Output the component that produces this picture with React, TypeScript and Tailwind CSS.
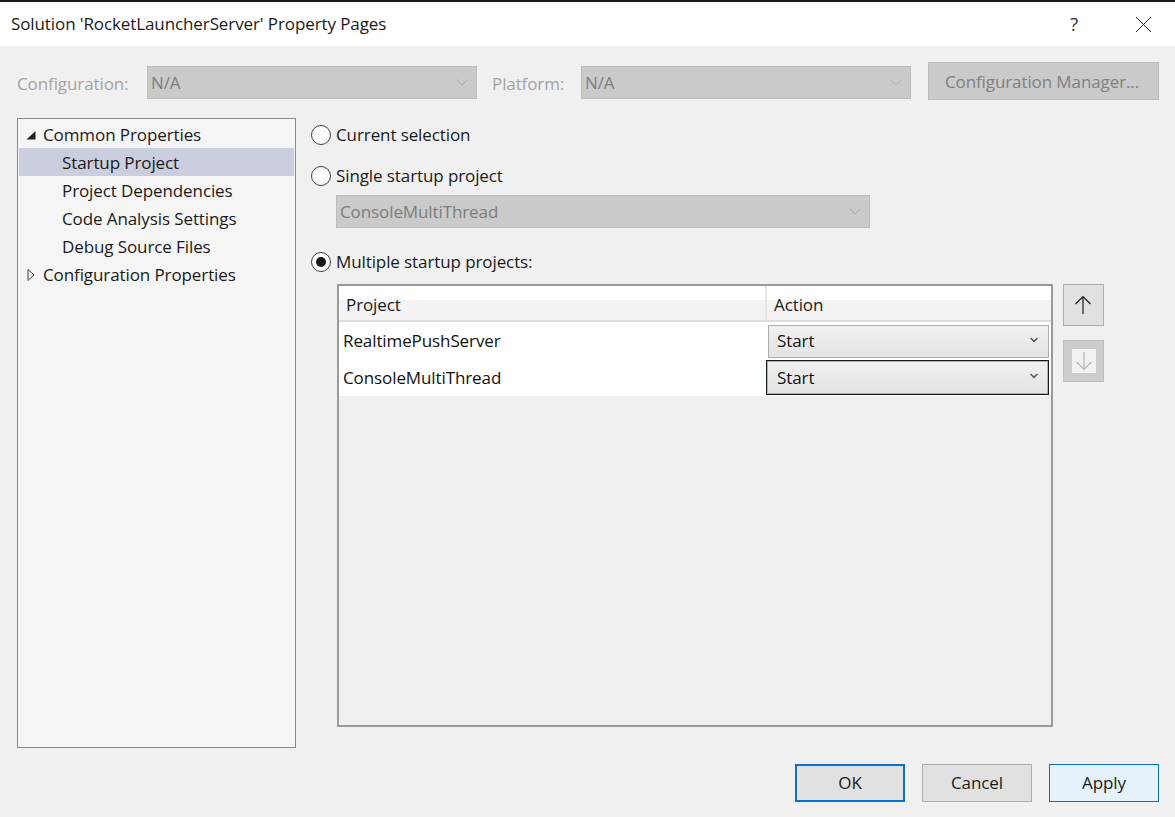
import React from "react";

const font = { fontFamily: '"Open Sans", "Noto Sans", sans-serif' };

function Chevron({ color = "#a8a8a8" }: { color?: string }) {
  return (
    <svg width="14" height="9" viewBox="0 0 14 9" fill="none" className="shrink-0">
      <path d="M1.5 1.5 L7 7 L12.5 1.5" stroke={color} strokeWidth="1" />
    </svg>
  );
}

function SmallChevron() {
  return (
    <svg width="8" height="6" viewBox="0 0 8 6" fill="none" className="mb-[3px] shrink-0">
      <path d="M0.6 1 L4 4.4 L7.4 1" stroke="#555" strokeWidth="1.5" />
    </svg>
  );
}

function DisabledCombo({ text, className }: { text: string; className: string }) {
  return (
    <div className={`flex h-[33px] items-center justify-between border border-[#bcbcbc] bg-[#cacaca] pl-[3px] pr-[7px] text-[#7d7d7d] ${className}`}>
      <span>{text}</span>
      <Chevron />
    </div>
  );
}

function Radio({ label, checked = false }: { label: string; checked?: boolean }) {
  return (
    <div className="flex h-[22px] items-center">
      <span className="flex h-[20px] w-[20px] shrink-0 items-center justify-center rounded-full border border-[#3f3f3f] bg-white">
        {checked && <span className="h-[10px] w-[10px] rounded-full bg-[#1a1a1a]" />}
      </span>
      <span className="ml-[5px] text-[#1a1a1a]">{label}</span>
    </div>
  );
}

function TreeRow({ label, selected = false }: { label: string; selected?: boolean }) {
  return (
    <div className={`flex h-[28px] items-center pl-[43px] pt-[2px] text-[#1a1a1a] ${selected ? "bg-[#cbcede]" : ""}`}>{label}</div>
  );
}

function Combo({ focused = false }: { focused?: boolean }) {
  return (
    <div
      className={`flex items-center justify-between bg-gradient-to-b from-[#f0f0f0] to-[#e4e4e4] pr-[10px] text-[#111] ${
        focused
          ? "h-[35px] w-[283px] border border-[#101820] pl-[10px] shadow-[inset_0_0_0_1px_#9fb6cf]"
          : "ml-[2px] h-[33px] w-[281px] border border-[#acacac] pl-[8px]"
      }`}
    >
      <span>Start</span>
      <SmallChevron />
    </div>
  );
}

function MoveButton({ up }: { up: boolean }) {
  return (
    <div className={`flex h-[42px] w-[41px] items-center justify-center border ${up ? "border-[#adadad] bg-[#e1e1e1]" : "border-[#bfbfbf] bg-[#cccccc]"}`}>
      <span className={`flex h-[24px] w-[24px] items-center justify-center ${up ? "pr-[2px]" : "bg-[#f2f2f2]"}`}>
        <svg width="18" height="20" viewBox="0 0 18 20" fill="none">
          {up ? (
            <path d="M9 19 V1.5 M1.5 9 L9 1.5 L16.5 9" stroke="#1a1a1a" strokeWidth="1.2" />
          ) : (
            <path d="M9 1 V18.5 M1.5 11 L9 18.5 L16.5 11" stroke="#b4b4b4" strokeWidth="1.2" />
          )}
        </svg>
      </span>
    </div>
  );
}

function FootButton({ label, className }: { label: string; className: string }) {
  return (
    <div className={`flex h-[38px] w-[110px] items-center justify-center text-[#1a1a1a] ${className}`}>{label}</div>
  );
}

export default function App() {
  return (
    <div style={font} className="flex h-[817px] w-[1175px] flex-col overflow-hidden bg-[#f0f0f0] text-[17px] leading-[22px] tracking-[-0.1px]">
      <div className="flex h-[46px] shrink-0 items-center justify-between border-t-2 border-[#1c1c1c] bg-white pl-[11px] pr-[23px] text-[#1a1a1a]">
        <span>Solution 'RocketLauncherServer' Property Pages</span>
        <div className="flex items-center gap-[57px]">
          <span className="text-[19px] text-[#333]">?</span>
          <svg width="17" height="17" viewBox="0 0 17 17" fill="none">
            <path d="M1 1 L16 16 M16 1 L1 16" stroke="#222" strokeWidth="1" />
          </svg>
        </div>
      </div>

      <div className="flex flex-col px-[16px] pl-[17px]">
        <div className="mt-[16px] flex h-[38px] items-center">
          <span className="mt-[6px] w-[130px] text-[#a4a4a4]">Configuration:</span>
          <DisabledCombo text="N/A" className="mt-[3px] w-[330px]" />
          <span className="ml-[15px] mt-[6px] w-[89px] text-[#a4a4a4]">Platform:</span>
          <DisabledCombo text="N/A" className="mt-[3px] w-[330px]" />
          <div className="ml-[17px] flex h-[38px] w-[231px] items-center justify-center border border-[#bcbcbc] bg-[#cacaca] pr-[3px] pt-[2px] text-[#808080]">
            Configuration Manager...
          </div>
        </div>

        <div className="mt-[18px] flex h-[630px]">
          <div className="flex h-full w-[279px] shrink-0 flex-col border border-[#8a8a8a] bg-[#f5f5f5] p-px">
            <div className="flex h-[28px] items-center pt-[2px] text-[#1a1a1a]">
              <svg width="12" height="10" viewBox="0 0 12 10" className="ml-[6px] mr-[6px]">
                <path d="M10.5 1 V9.5 H1.5 Z" fill="#222" />
              </svg>
              Common Properties
            </div>
            <TreeRow label="Startup Project" selected />
            <TreeRow label="Project Dependencies" />
            <TreeRow label="Code Analysis Settings" />
            <TreeRow label="Debug Source Files" />
            <div className="flex h-[28px] items-center pt-[2px] text-[#1a1a1a]">
              <svg width="8" height="14" viewBox="0 0 8 14" className="ml-[8px] mr-[8px]">
                <path d="M1 1.5 L7 7 L1 12.5 Z" fill="#f5f5f5" stroke="#444" />
              </svg>
              Configuration Properties
            </div>
          </div>

          <div className="ml-[15px] flex min-w-0 flex-1 flex-col">
            <div className="mt-[6px]">
              <Radio label="Current selection" />
            </div>
            <div className="mt-[19px]">
              <Radio label="Single startup project" />
            </div>
            <DisabledCombo text="ConsoleMultiThread" className="ml-[25px] mt-[8px] w-[534px]" />
            <div className="mt-[23px]">
              <Radio label="Multiple startup projects:" checked />
            </div>

            <div className="ml-[26px] mt-[11px] flex">
              <div className="flex h-[443px] w-[716px] flex-col border-2 border-[#9a9a9a] bg-[#f0f0f0]">
                <div className="flex h-[36px] shrink-0 border-b-2 border-[#dcdcdc] bg-gradient-to-b from-white from-40% to-[#f3f3f3] to-40% text-[#1a1a1a]">
                  <div className="flex w-[428px] items-center border-r-2 border-[#e6e6e6] pl-[7px] pt-[3px]">Project</div>
                  <div className="flex flex-1 items-center pl-[7px] pt-[3px]">Action</div>
                </div>
                <div className="flex h-[37px] items-center justify-between bg-white pl-[4px] text-[#111]">
                  <span>RealtimePushServer</span>
                  <div className="mr-[2px] mt-[1px]">
                    <Combo />
                  </div>
                </div>
                <div className="flex h-[37px] items-center justify-between bg-white pl-[4px] text-[#111]">
                  <span>ConsoleMultiThread</span>
                  <div className="mr-[2px]">
                    <Combo focused />
                  </div>
                </div>
              </div>
              <div className="ml-[10px] flex flex-col gap-[14px]">
                <MoveButton up />
                <MoveButton up={false} />
              </div>
            </div>
          </div>
        </div>

        <div className="mt-[16px] flex justify-end gap-[17px]">
          <FootButton label="OK" className="border-2 border-[#0f6fc0] bg-[#e1e1e1]" />
          <FootButton label="Cancel" className="border border-[#adadad] bg-[#e1e1e1]" />
          <FootButton label="Apply" className="border border-[#0b72bb] bg-[#e5f1fb]" />
        </div>
      </div>
    </div>
  );
}
